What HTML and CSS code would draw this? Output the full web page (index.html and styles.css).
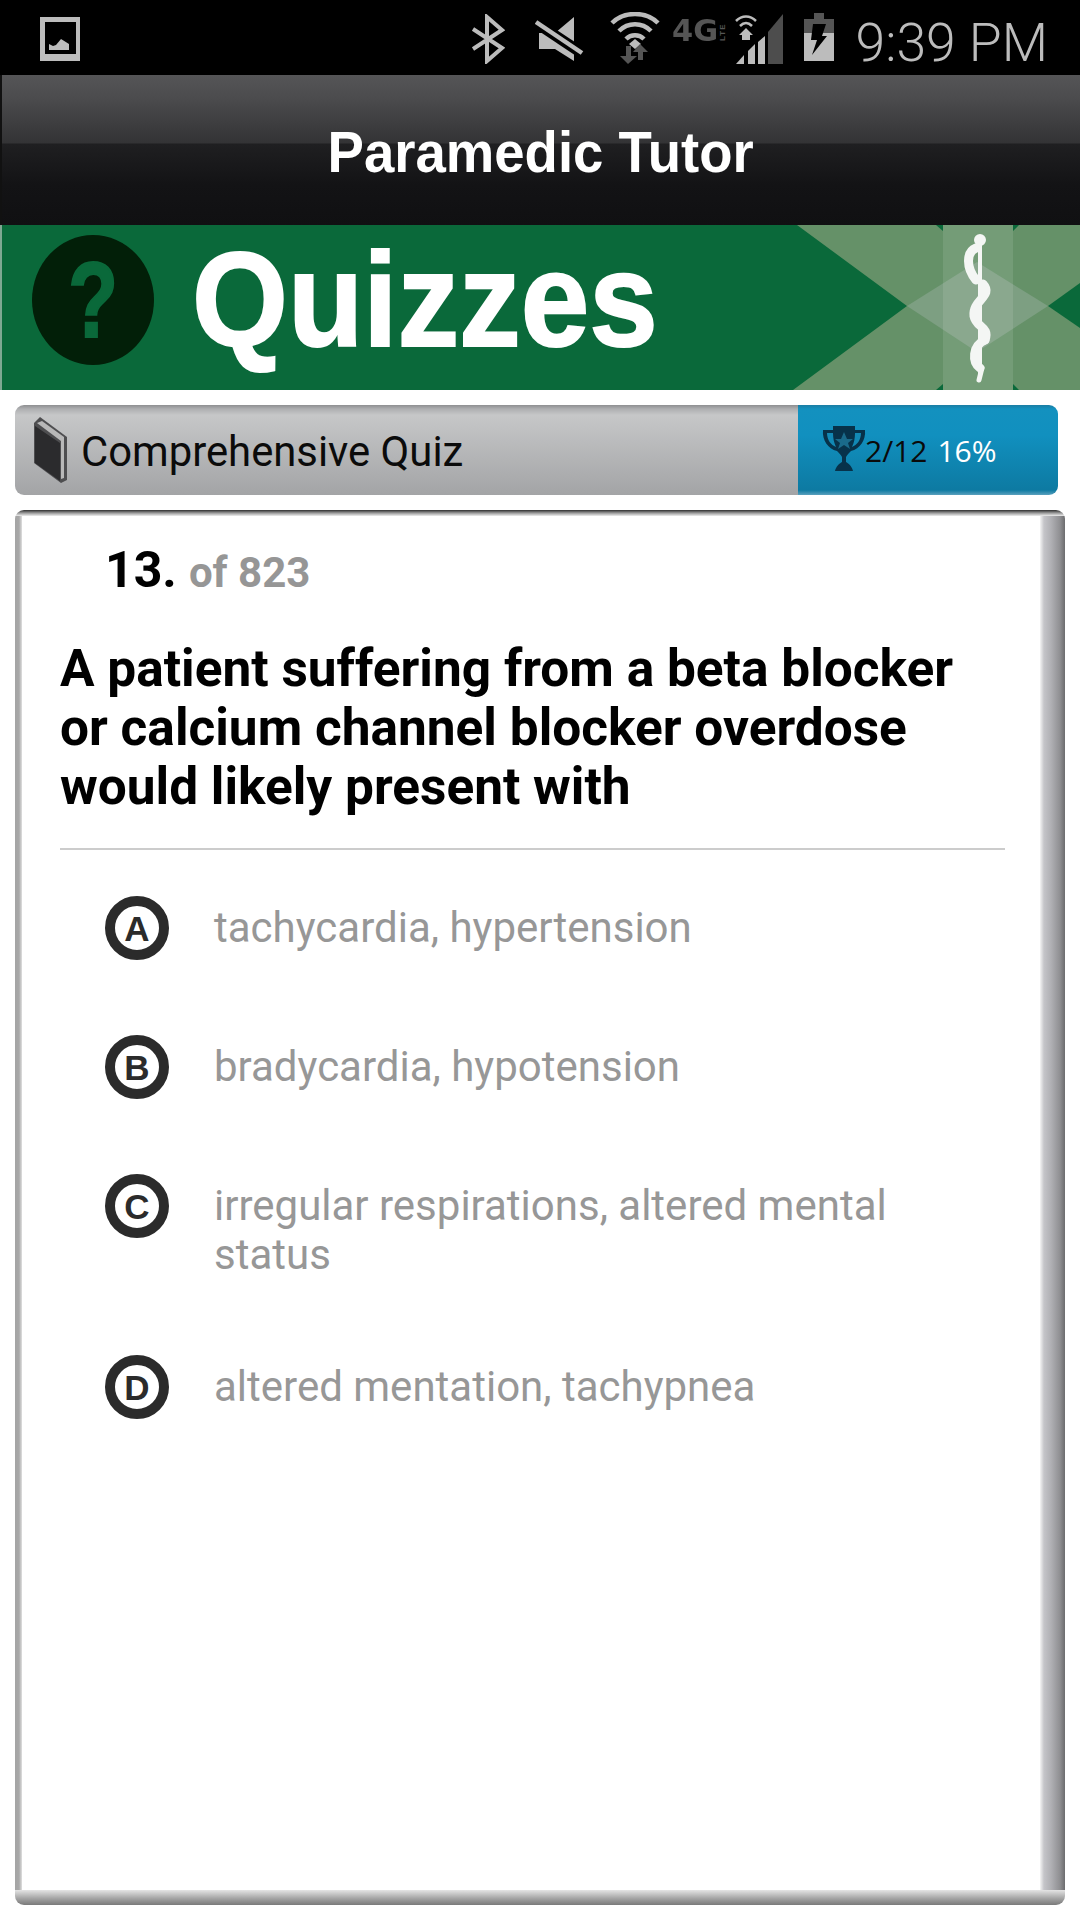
FILE: index.html
```html
<!DOCTYPE html>
<html lang="en">
<head>
<meta charset="utf-8">
<title>Paramedic Tutor</title>
<link rel="stylesheet" href="styles.css">
</head>
<body>
<div class="status">
  <svg class="ic-picture" width="40" height="44" viewBox="0 0 40 44"><rect width="40" height="44" fill="#bcbcbc"/><rect x="5" y="5" width="31" height="32" fill="#000"/><path d="M9 33V27l4 2 3-1 5-6 8 5v6z" fill="#bcbcbc"/></svg>
  <div class="status-right">
    <svg class="ic-bt" width="34" height="50" viewBox="0 0 34 50"><path d="M2 15 31 34 16 47V3L31 16 2 35" fill="none" stroke="#bcbcbc" stroke-width="4"/></svg>
    <svg class="ic-mute" width="50" height="46" viewBox="0 0 50 46"><path d="M4 17H20L39 1V45L20 33H4z" fill="#bcbcbc"/><path d="M0 6 48 38" stroke="#000" stroke-width="11"/><path d="M1 6 47 37" stroke="#bcbcbc" stroke-width="4.500"/></svg>
    <svg class="ic-wifi" width="50" height="52" viewBox="0 0 50 52"><g fill="none" stroke="#bcbcbc"><path d="M2 11C14-1 36-1 48 11" stroke-width="4.500"/><path d="M9 19C18 10 32 10 41 19" stroke-width="4.500"/><path d="M16 27C21 22 29 22 34 27" stroke-width="4.500"/></g><path d="M25 27l6 5-6 5-6-5z" fill="#bcbcbc"/><path d="M16 34h5V44h6L18 52 10 44h6z" fill="#555"/><path d="M30 32l8 8h-5V48H28V40H23z" fill="#555"/></svg>
    <span class="lte"><span class="lte-big">4G</span><span class="lte-small">LTE</span></span>
    <svg class="ic-signal" width="50" height="50" viewBox="0 0 50 50"><g fill="none" stroke="#bcbcbc" stroke-width="2.500"><path d="M1 7C7 1 15 1 21 7"/><path d="M5 12C9 8 13 8 17 12"/></g><path d="M11 14 18 21H15V26H7V21H4z" fill="#bcbcbc"/><path d="M1 50 9 41V50z" fill="#bcbcbc"/><path d="M13 37 20 30V50H13z" fill="#bcbcbc"/><path d="M23 28 30 22V50H23z" fill="#bcbcbc"/><path d="M33 18 48 0V50H33z" fill="#4d4d4d"/></svg>
    <svg class="ic-batt" width="30" height="48" viewBox="0 0 30 48"><rect x="10" width="10" height="6" fill="#555"/><rect y="6" width="30" height="14" fill="#555"/><rect y="20" width="30" height="28" fill="#bcbcbc"/><path d="M9 11H22L18 23H23L8 42 13 27H7z" fill="#000"/></svg>
    <span class="time">9:39 PM</span>
  </div>
</div>
<header class="appbar"><h1 class="appbar-title">Paramedic Tutor</h1></header>
<section class="banner">
  <svg class="banner-art" width="300" height="165" viewBox="780 225 300 165">
    <path d="M797 225 907 306 793 390H1080V225z" fill="#659168"/>
    <path d="M1048 306 1080 283V328z" fill="#0a693a"/>
    <path d="M936 225H943V231zM1019 225H1013V231zM936 390H943V384zM1019 390H1013V384z" fill="#0a693a"/>
    <path d="M907 306 977 262 1048 306 977 352z" fill="#7d9f82"/>
    <rect x="943" y="225" width="70" height="165" fill="#fff" opacity=".1"/>
    <g class="rod" fill="none" stroke="#f4f6f4" stroke-linecap="round">
      <path d="M980 240V374" stroke-width="4"/>
      <circle cx="980" cy="240" r="4" fill="#f4f6f4" stroke-width="4"/>
      <path d="M976 248C966 252 966 268 976 280" stroke-width="9"/>
      <path d="M983 284C994 296 972 300 974 316C976 328 990 326 985 340" stroke-width="9"/>
      <path d="M985 340C972 346 972 362 980 368" stroke-width="9"/>
      <path d="M982 368 979 380" stroke-width="5"/>
    </g>
  </svg>
  <div class="banner-badge"><span class="banner-q">?</span></div>
  <h2 class="banner-title">Quizzes</h2>
</section>
<div class="quizbar">
  <div class="quizbar-name">
    <svg class="ic-book" width="36" height="66" viewBox="0 0 36 66"><path d="M7 0 34 20V63L28 66 1 46V6z" fill="#4e4e50"/><path d="M9 4 31 20V61L28 62V24L4 6z" fill="#b8b8b8"/><path d="M2 9 27 26V64L2 46z" fill="#2b2b2d"/></svg>
    <span class="quizbar-text">Comprehensive Quiz</span>
  </div>
  <div class="quizbar-score">
    <svg class="ic-trophy" width="44" height="46" viewBox="0 0 44 46"><path d="M11 0H33V4H43C44 14 38 23 29 25 27 27 25 29 24 31V36C26 37 30 40 31 45H13C14 40 18 37 20 36V31C19 29 17 27 15 25 6 23 0 14 1 4H11z" fill="#07324a"/><path d="M5 7H11C11 12 12 17 14 21 9 19 5 14 5 7zM39 7H33C33 12 32 17 30 21 35 19 39 14 39 7z" fill="#1289b5"/><path d="M22 6 25 13H31L26 17 28 23 22 19 16 23 18 17 13 13H19z" fill="#1a6a8a"/></svg>
    <span class="score-count">2/12</span>
    <span class="score-pct">16%</span>
  </div>
</div>
<main class="card">
  <div class="card-inner">
    <p class="qnum"><b class="qnum-n">13.</b> <span class="qnum-of">of 823</span></p>
    <h3 class="question">A patient suffering from a beta blocker or calcium channel blocker overdose would likely present with</h3>
    <ul class="options">
      <li class="option"><span class="opt-badge">A</span><span class="opt-text">tachycardia, hypertension</span></li>
      <li class="option"><span class="opt-badge">B</span><span class="opt-text">bradycardia, hypotension</span></li>
      <li class="option"><span class="opt-badge">C</span><span class="opt-text">irregular respirations, altered mental status</span></li>
      <li class="option"><span class="opt-badge">D</span><span class="opt-text">altered mentation, tachypnea</span></li>
    </ul>
  </div>
</main>
</body>
</html>
```
FILE: styles.css
```css
* { box-sizing: border-box; }
html, body { margin: 0; padding: 0; }
body { width: 1080px; height: 1920px; background: #fff; overflow: hidden; font-family: Roboto, "Liberation Sans", sans-serif; }

.status { height: 75px; background: #000; display: flex; align-items: flex-start; justify-content: space-between; padding: 17px 32px 0 40px; }
.status-right { display: flex; align-items: flex-start; margin-top: -4px; }
.ic-bt { margin-top: 1px; }
.ic-mute { margin: 3px 0 0 30px; }
.ic-wifi { margin: -1px 0 0 25px; }
.lte { display: flex; align-items: flex-start; margin: 2px 0 0 12px; width: 64px; color: #555; position: relative; }
.lte-big { font: bold 31px/31px "DejaVu Sans", sans-serif; transform: scaleX(.98); transform-origin: left top; }
.lte-small { position: absolute; left: 46px; top: 26px; font: bold 8px/9px "Liberation Sans", sans-serif; transform: rotate(-90deg); transform-origin: left top; white-space: nowrap; letter-spacing: 1px; }
.ic-signal { margin: 1px 0 0 -1px; }
.ic-batt { margin: 0 0 0 19px; }
.time { color: #bcbcbc; font: 300 53.500px/54px Roboto, sans-serif; margin: 3px 0 0 21px; white-space: nowrap; }

.appbar { height: 150px; display: flex; align-items: center; justify-content: center; border-left: 2px solid #111; background: linear-gradient(to bottom, #555557 0, #4c4c4e 22px, #333335 68px, #1f1f21 69px, #131315 110px, #101012 150px); }
.appbar-title { margin: 4px 0 0; color: #fff; font: bold 58px/60px "Liberation Sans", Arial, sans-serif; transform: scaleX(.94); }

.banner { position: relative; height: 165px; background: #0a693a; border-left: 2px solid #7fa892; display: flex; align-items: flex-start; padding-top: 10px; overflow: hidden; }
.banner-art { position: absolute; right: 0; top: 0; }
.banner-badge { width: 122px; height: 130px; margin-left: 30px; border-radius: 50%; background: #021f08; display: flex; align-items: center; justify-content: center; filter: blur(.5px); flex: none; }
.banner-q { color: #0a693a; font: bold 108px/108px "Liberation Sans", sans-serif; transform: scaleX(.76); -webkit-text-stroke: 2px #0a693a; }
.banner-title { margin: 0 0 0 38px; color: #fff; font: bold 134px/130px "Liberation Sans", sans-serif; transform: scaleX(.92); transform-origin: left center; -webkit-text-stroke: 2px #fff; filter: blur(.6px); }

.quizbar { margin: 15px 0 0 15px; width: 1043px; height: 90px; display: flex; border-radius: 9px; overflow: hidden; }
.quizbar-name { flex: 1; display: flex; align-items: center; padding-left: 18px; background: linear-gradient(to bottom, #8e8f91 0, #aeafb1 4px, #c6c7c8 10px, #a3a4a6 100%); }
.ic-book { flex: none; }
.quizbar-text { margin: 2px 0 0 12px; font-size: 41.800px; color: #0b0b0b; }
.quizbar-score { width: 260px; display: flex; align-items: flex-start; padding: 21px 0 0 24px; background: linear-gradient(to bottom, #1b7da3 0, #1391bf 4px, #1190bf 30px, #0d7aa2 85px, #5aa0bd 100%); font: 30px/46px "Open Sans", sans-serif; }
.ic-trophy { flex: none; margin-right: -1px; }
.score-count { color: #0a0a0a; margin-top: 2px; }
.score-pct { color: #fff; margin: 2px 0 0 10px; }

.card { width: 1050px; height: 1395px; margin: 15px 0 0 15px; padding: 6px 25px 15px 7px; border-radius: 9px; background:
  linear-gradient(to bottom, #2e2e2e 0, #9a9a9a 3px, #eeeeee 6px) top / 100% 6px no-repeat,
  linear-gradient(to top, #7a7a7a 0, #a0a0a0 6px, #e4e4e4 15px) bottom / 100% 15px no-repeat,
  linear-gradient(to right, #a4a4a4 0, #a8a8a8 4px, #e0e0e0 7px) left / 7px 100% no-repeat,
  linear-gradient(to left, #6c6c6e 0, #8f8f92 5px, #b0b0b4 14px, #c4c4c8 21px, #f4f4f4 25px) right / 25px 100% no-repeat; }
.card-inner { height: 100%; background: #fff; border-radius: 14px; padding: 24px 35px 0 38px; }
.qnum { margin: 0 0 0 45px; height: 60px; white-space: nowrap; display: flex; align-items: baseline; line-height: 60px; }
.qnum-n { font-size: 50px; font-weight: 700; color: #000; }
.qnum-of { font-size: 42px; font-weight: 700; color: #969696; margin-left: 12px; }
.question { margin: 39px 0 0; padding-bottom: 32px; border-bottom: 2px solid #ccc; font-size: 51.400px; line-height: 59px; font-weight: 700; color: #000; }
.options { list-style: none; margin: 46px 0 0 45px; padding: 0; }
.option { display: flex; min-height: 139px; align-items: flex-start; }
.opt-badge { flex: none; width: 64px; height: 64px; border-radius: 50%; border: 10px solid #2b2b2b; display: flex; align-items: center; justify-content: center; font: bold 35px/1 "Liberation Sans", sans-serif; color: #2b2b2b; }
.opt-text { margin-left: 45px; padding: 7px 0 76px; font-size: 42px; line-height: 49px; color: #979797; }
```
